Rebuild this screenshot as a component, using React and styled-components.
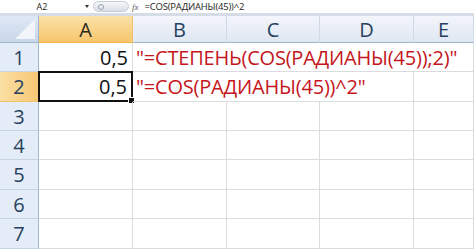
import React from "react";
import styled, { createGlobalStyle } from "styled-components";

const Global = createGlobalStyle`
  html, body { margin: 0; padding: 0; background: #fff; overflow: hidden; }
  body { font-family: "Open Sans", "Liberation Sans", sans-serif; }
`;

const Page = styled.div`
  width: 474px;
  height: 249px;
  overflow: hidden;
  display: flex;
  flex-direction: column;
`;

const FormulaBar = styled.div`
  height: 13px;
  display: flex;
  align-items: center;
  background: #fff;
  border-bottom: 3px solid #d5dce6;
  font-size: 9px;
  color: #1e1e1e;
`;

const NameBox = styled.div`
  width: 84px;
  text-align: center;
`;

const Caret = styled.div`
  width: 0;
  height: 0;
  margin: 0 4px 0 1px;
  border-left: 2.5px solid transparent;
  border-right: 2.5px solid transparent;
  border-top: 3px solid #333;
`;

const Handle = styled.div`
  width: 36px;
  height: 11px;
  border-radius: 6px;
  background: linear-gradient(#f4f6f9, #d9dee6);
  border: 1px solid #c4cbd5;
  display: flex;
  align-items: center;
  padding-left: 4px;
  box-sizing: border-box;
  &::before {
    content: "";
    width: 4px;
    height: 4px;
    border-radius: 50%;
    border: 1px solid #9aa5b3;
  }
`;

const Fx = styled.div`
  font-family: "Liberation Serif", serif;
  font-style: italic;
  font-size: 9px;
  color: #555;
  margin: 0 6px 0 3px;
`;

const FormulaText = styled.div`
  font-size: 9.5px;
  letter-spacing: -0.2px;
`;

const Grid = styled.div`
  display: grid;
  grid-template-columns: 39px 94px 94px 93px 94px 60px;
  grid-template-rows: 27px 29px 30px 29px 29px 30px 29px 30px;
`;

const Corner = styled.div`
  background: linear-gradient(#dfe8f5, #c9d7ea);
  border-right: 1px solid #9eb6ce;
  border-bottom: 1px solid #9eb6ce;
  position: relative;
  overflow: hidden;
  &::after {
    content: "";
    position: absolute;
    right: 3px;
    bottom: 3px;
    border-left: 20px solid transparent;
    border-bottom: 20px solid #f2f5fa;
  }
`;

const ColHead = styled.div`
  display: flex;
  align-items: center;
  justify-content: center;
  font-size: 20px;
  color: ${(p) => (p.$sel ? "#2b2b1c" : "#27415f")};
  background: ${(p) =>
    p.$sel
      ? "linear-gradient(#fbe2a8, #f7c56e)"
      : "linear-gradient(#f3f6fb, #dfe7f2)"};
  border-right: 1px solid ${(p) => (p.$sel ? "#f2c26b" : "#d0d9e6")};
  border-bottom: 1px solid ${(p) => (p.$sel ? "#f2b84c" : "#9eb6ce")};
  box-sizing: border-box;
`;

const RowHead = styled.div`
  display: flex;
  align-items: center;
  justify-content: center;
  font-size: 20px;
  color: #27415f;
  background: ${(p) =>
    p.$sel ? "linear-gradient(90deg, #fbe0a4, #f7c774)" : "#e4ecf7"};
  border-right: 1px solid ${(p) => (p.$sel ? "#f2b84c" : "#9eb6ce")};
  border-bottom: 1px solid ${(p) => (p.$sel ? "#f2c26b" : "#c5d3e3")};
  box-sizing: border-box;
`;

const Cell = styled.div`
  grid-column: ${(p) => p.$span || "auto"};
  display: flex;
  align-items: center;
  justify-content: ${(p) => (p.$num ? "flex-end" : "flex-start")};
  padding: 0 ${(p) => (p.$num ? "4px" : "3px")};
  font-size: 20px;
  letter-spacing: ${(p) => (p.$red ? "-0.2px" : "0")};
  color: ${(p) => (p.$red ? "#c4161c" : "#111")};
  border-right: 1px solid #dadcdd;
  border-bottom: 1px solid #dadcdd;
  box-sizing: border-box;
  white-space: nowrap;
  position: relative;
  ${(p) =>
    p.$active &&
    `
    border: 2px solid #111;
    margin: -1px 0 0 -1px;
    &::after {
      content: "";
      position: absolute;
      right: -4px;
      bottom: -4px;
      width: 5px;
      height: 5px;
      background: #111;
      border: 1px solid #fff;
    }
  `}
`;

const cols = ["A", "B", "C", "D", "E"];

export default function App() {
  const emptyRows = [3, 4, 5, 6, 7];
  return (
    <Page>
      <Global />
      <FormulaBar>
        <NameBox>A2</NameBox>
        <Caret />
        <Handle />
        <Fx>fx</Fx>
        <FormulaText>=COS(РАДИАНЫ(45))^2</FormulaText>
      </FormulaBar>
      <Grid>
        <Corner />
        {cols.map((c) => (
          <ColHead key={c} $sel={c === "A"}>
            {c}
          </ColHead>
        ))}

        <RowHead>1</RowHead>
        <Cell $num>0,5</Cell>
        <Cell $red $span="span 4">"=СТЕПЕНЬ(COS(РАДИАНЫ(45));2)"</Cell>

        <RowHead $sel>2</RowHead>
        <Cell $num $active>0,5</Cell>
        <Cell $red $span="span 3">"=COS(РАДИАНЫ(45))^2"</Cell>
        <Cell />

        {emptyRows.map((r) => (
          <React.Fragment key={r}>
            <RowHead>{r}</RowHead>
            <Cell />
            <Cell />
            <Cell />
            <Cell />
            <Cell />
          </React.Fragment>
        ))}
      </Grid>
    </Page>
  );
}
